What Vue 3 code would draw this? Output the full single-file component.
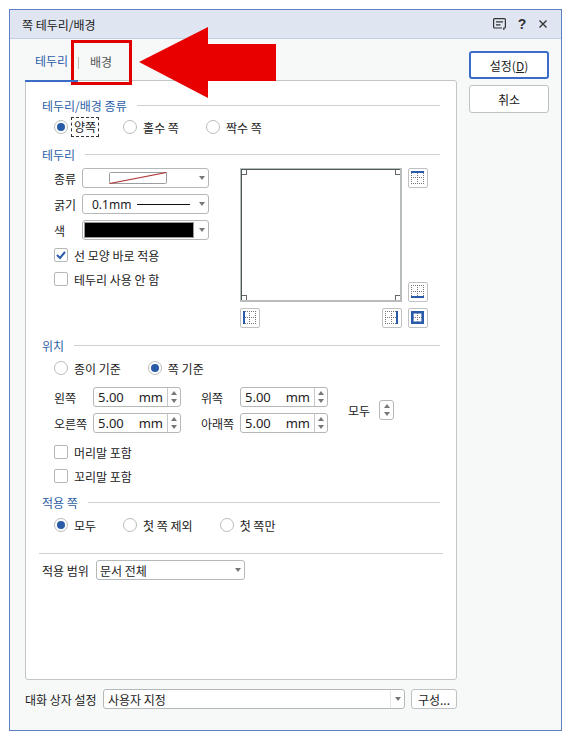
<script setup>
const sideRadios = [
  { label: '양쪽', on: true, focus: true },
  { label: '홀수 쪽' },
  { label: '짝수 쪽' }
]
const baseRadios = [{ label: '종이 기준' }, { label: '쪽 기준', on: true }]
const pageRadios = [{ label: '모두', on: true }, { label: '첫 쪽 제외' }, { label: '첫 쪽만' }]
const margins = [
  { label: '왼쪽', value: '5.00' },
  { label: '위쪽', value: '5.00' },
  { label: '오른쪽', value: '5.00' },
  { label: '아래쪽', value: '5.00' }
]
const edgeButtons = [
  { cls: 'pos-top', bar: 'M2 3h13', w: 2 },
  { cls: 'pos-bottom', bar: 'M2 14h13', w: 2 },
  { cls: 'pos-left', bar: 'M3 2v13', w: 2 },
  { cls: 'pos-right', bar: 'M14 2v13', w: 2 },
  { cls: 'pos-all', bar: 'M3.300 3.300h10.400v10.400H3.300z', w: 2.6 }
]
</script>

<template>
  <div class="page">
    <div class="win">
      <header class="title">
        <span>쪽 테두리/배경</span>
        <div class="title-icons">
          <svg width="13" height="14" viewBox="0 0 13 14" fill="none" stroke="#333" stroke-width="1.2">
            <path d="M9 11H1.600a1 1 0 0 1-1-1V2.600a1 1 0 0 1 1-1h9.800a1 1 0 0 1 1 1V10a1 1 0 0 1-1 1h-.6v2" />
            <path d="M3 4.800h7M3 7.800h4.500" />
          </svg>
          <span class="help">?</span>
          <svg width="10" height="10" viewBox="0 0 10 10" fill="none" stroke="#333" stroke-width="1.4">
            <path d="M1.500 1.500l7 7M8.500 1.500l-7 7" />
          </svg>
        </div>
      </header>

      <div class="body">
        <div class="main">
          <div class="left">
            <nav class="tabs">
              <div class="tab active">테두리</div>
              <div class="tab-sep"></div>
              <div class="tab">배경</div>
            </nav>

            <section class="panel">
              <div class="legend first"><span>테두리/배경 종류</span><i></i></div>
              <div class="radios">
                <label v-for="r in sideRadios" :key="r.label" class="radio">
                  <b class="dot" :class="{ on: r.on }"></b>
                  <span :class="{ focus: r.focus }">{{ r.label }}</span>
                </label>
              </div>

              <div class="legend after-radio"><span>테두리</span><i></i></div>
              <div class="border-block">
                <div class="controls">
                  <div class="field">
                    <span class="flabel">종류</span>
                    <div class="select fsel">
                      <svg class="line-none" width="58" height="12" viewBox="0 0 58 12" fill="none">
                        <rect x="0.500" y="0.500" width="57" height="11" rx="1" stroke="#9a9e9e" />
                        <path d="M0.500 11.500L57.500 0.500" stroke="#b03a3a" stroke-width="1.200" />
                      </svg>
                      <b class="caret"></b>
                    </div>
                  </div>
                  <div class="field">
                    <span class="flabel">굵기</span>
                    <div class="select fsel">
                      <span class="thick">0.1mm</span>
                      <i class="thick-line"></i>
                      <b class="caret"></b>
                    </div>
                  </div>
                  <div class="field">
                    <span class="flabel">색</span>
                    <div class="select fsel">
                      <div class="swatch"></div>
                      <b class="caret"></b>
                    </div>
                  </div>
                  <label class="check first-check">
                    <b class="box">
                      <svg width="12" height="12" viewBox="0 0 12 12" fill="none" stroke="#2a5ba8" stroke-width="2">
                        <path d="M2 6l3 3 5-6" />
                      </svg>
                    </b>
                    <span>선 모양 바로 적용</span>
                  </label>
                  <label class="check"><b class="box"></b><span>테두리 사용 안 함</span></label>
                </div>

                <div class="preview-grid">
                  <div class="preview">
                    <i class="crop tl"></i><i class="crop tr"></i><i class="crop bl"></i><i class="crop br"></i>
                  </div>
                  <button v-for="e in edgeButtons" :key="e.cls" class="edge" :class="e.cls">
                    <svg width="18" height="18" viewBox="0 0 18 18" fill="none">
                      <path d="M2 2.500h13M2 8.500h13M2 14.500h13M2.500 2v13M8.500 2v13M14.500 2v13" stroke="#777" stroke-width="1" stroke-dasharray="1 1" />
                      <path :d="e.bar" stroke="#2a5ba8" :stroke-width="e.w" />
                    </svg>
                  </button>
                </div>
              </div>

              <div class="legend after-block"><span>위치</span><i></i></div>
              <div class="radios near">
                <label v-for="r in baseRadios" :key="r.label" class="radio">
                  <b class="dot" :class="{ on: r.on }"></b>
                  <span>{{ r.label }}</span>
                </label>
              </div>

              <div class="spins">
                <template v-for="m in margins" :key="m.label">
                  <span class="spin-label">{{ m.label }}</span>
                  <div class="spin-input">
                    <span>{{ m.value }}</span>
                    <span>mm</span>
                    <div class="stepper"><b class="up"></b><b class="down"></b></div>
                  </div>
                </template>
                <span class="all-label">모두</span>
                <div class="all-spin"><b class="up"></b><b class="down"></b></div>
              </div>

              <label class="check header-check"><b class="box"></b><span>머리말 포함</span></label>
              <label class="check"><b class="box"></b><span>꼬리말 포함</span></label>

              <div class="legend after-check"><span>적용 쪽</span><i></i></div>
              <div class="radios near">
                <label v-for="r in pageRadios" :key="r.label" class="radio">
                  <b class="dot" :class="{ on: r.on }"></b>
                  <span>{{ r.label }}</span>
                </label>
              </div>

              <hr class="rule" />

              <div class="scope">
                <span class="scope-label">적용 범위</span>
                <div class="select scope-sel"><span>문서 전체</span><b class="caret"></b></div>
              </div>
            </section>
          </div>

          <aside class="side">
            <button class="btn primary">설정(<u>D</u>)</button>
            <button class="btn">취소</button>
          </aside>
        </div>

        <footer class="foot">
          <span class="foot-label">대화 상자 설정</span>
          <div class="select foot-sel"><span>사용자 지정</span><em></em><b class="caret"></b></div>
          <button class="btn compose">구성...</button>
        </footer>
      </div>

      <div class="mark-rect"></div>
      <svg class="mark-arrow" width="140" height="74" viewBox="0 0 140 74">
        <polygon points="0,35 69,0 69,17 137,17 137,54 69,54 69,71" fill="#e80000" />
      </svg>
    </div>
  </div>
</template>

<style scoped>
.page {
  width: 570px;
  height: 739px;
  box-sizing: border-box;
  padding: 9px 8px 0 9px;
  background: #fff;
  font-family: "Noto Sans CJK KR", "Noto Sans", sans-serif;
  font-size: 12px;
  color: #222;
  overflow: hidden;
}
.win {
  position: relative;
  height: 722px;
  box-sizing: border-box;
  border: 1px solid #5b80c4;
  display: flex;
  flex-direction: column;
  background: #f7f9f9;
}
.title {
  height: 28px;
  flex: none;
  border-bottom: 1px solid #c3d0e4;
  background: #dfe5f1;
  display: flex;
  align-items: center;
  justify-content: space-between;
  padding: 0 13px 0 12px;
}
.title-icons {
  display: flex;
  align-items: center;
  gap: 11px;
}
.help {
  width: 10px;
  text-align: center;
  font-family: "Liberation Sans", sans-serif;
  font-weight: 700;
  font-size: 14px;
  color: #333;
}
.body {
  flex: 1;
  display: flex;
  flex-direction: column;
  padding-left: 15px;
}
.main {
  display: flex;
  gap: 12px;
}
.left {
  width: 432px;
}
.tabs {
  height: 41px;
  display: flex;
  align-items: center;
  padding-top: 5px;
  box-sizing: border-box;
  position: relative;
  z-index: 1;
}
.tab {
  color: #555;
  line-height: 18px;
}
.tab.active {
  color: #2d5fa8;
  width: 53px;
  box-sizing: border-box;
  padding-left: 10px;
  height: 38px;
  line-height: 33px;
  border-bottom: 2px solid #3a6cc8;
  margin-bottom: -3px;
  margin-top: -2px;
}
.tab-sep {
  width: 1px;
  height: 12px;
  background: #bbb;
  margin-right: 11px;
  position: relative;
  top: 1px;
}
.panel {
  height: 600px;
  box-sizing: border-box;
  border: 1px solid #c2c6c6;
  border-radius: 3px;
  background: #fff;
  padding: 12px 16px 0 16px;
}
.legend {
  height: 24px;
  display: flex;
  align-items: center;
  gap: 10px;
  color: #2d5fa8;
}
.legend i {
  flex: 1;
  height: 1px;
  background: #cfd1d1;
}
.after-radio,
.after-block {
  margin-top: 5px;
}
.after-check {
  margin-top: 4px;
}
.radios {
  height: 20px;
  display: flex;
  align-items: center;
  gap: 27px;
  margin-left: 12px;
}
.radios.near {
  margin-top: 1px;
}
.radio {
  display: flex;
  align-items: center;
  gap: 6px;
}
.dot {
  width: 14px;
  height: 14px;
  box-sizing: border-box;
  border: 1px solid #b9bcbc;
  border-radius: 50%;
  background: #fff;
  display: flex;
  align-items: center;
  justify-content: center;
}
.dot.on::after {
  content: "";
  width: 8px;
  height: 8px;
  border-radius: 50%;
  background: #2a5ba8;
}
.focus {
  outline: 1px dashed #333;
  outline-offset: 2px;
  line-height: 14px;
}
.border-block {
  display: flex;
  margin: 2px 0 0 12px;
}
.controls {
  width: 186px;
  display: flex;
  flex-direction: column;
}
.field {
  height: 20px;
  display: flex;
  align-items: center;
  margin-bottom: 6px;
}
.flabel {
  width: 28px;
}
.select {
  position: relative;
  height: 20px;
  box-sizing: border-box;
  border: 1px solid #b4b8b8;
  border-radius: 3px;
  background: #fff;
  display: flex;
  align-items: center;
}
.fsel {
  width: 127px;
}
.caret {
  position: absolute;
  right: 3px;
  top: 7px;
  width: 0;
  height: 0;
  border-left: 3px solid transparent;
  border-right: 3px solid transparent;
  border-top: 4px solid #777;
}
.line-none {
  margin-left: 26px;
}
.thick {
  margin-left: 9px;
  font-family: "Noto Sans", sans-serif;
}
.thick-line {
  width: 53px;
  height: 1px;
  background: #111;
  margin-left: 6px;
}
.swatch {
  width: 110px;
  height: 16px;
  margin-left: 1px;
  box-sizing: border-box;
  background: #000;
  border: 1px solid #999;
}
.check {
  height: 20px;
  display: flex;
  align-items: center;
  gap: 6px;
}
.check + .check {
  margin-top: 4px;
}
.first-check {
  margin-top: -1px;
}
.box {
  width: 14px;
  height: 14px;
  box-sizing: border-box;
  border: 1px solid #b4b8b8;
  border-radius: 2px;
  background: #fff;
  display: flex;
  align-items: center;
  justify-content: center;
}
.preview-grid {
  display: grid;
  grid-template-columns: 20px 122px 20px 6px 20px;
  grid-template-rows: 20px 94px 20px 6px 20px;
}
.preview {
  grid-column: 1 / 4;
  grid-row: 1 / 4;
  position: relative;
  box-sizing: border-box;
  background: #fff;
  border: 1px solid #b8bcbc;
  border-right-width: 2px;
  border-bottom-width: 2px;
  box-shadow: inset 1px 1px 0 #4a5a58;
}
.crop {
  position: absolute;
  width: 4px;
  height: 4px;
  border: 0 solid #666;
}
.tl { left: 1px; top: 1px; border-width: 0 1px 1px 0; }
.tr { right: 0; top: 1px; border-width: 0 0 1px 1px; }
.bl { left: 1px; bottom: 0; border-width: 1px 1px 0 0; }
.br { right: 0; bottom: 0; border-width: 1px 0 0 1px; }
.edge {
  width: 20px;
  height: 20px;
  padding: 0;
  box-sizing: border-box;
  border: 1px solid #bfc2c2;
  border-radius: 2px;
  background: #fff;
  display: flex;
  align-items: center;
  justify-content: center;
}
.pos-top { grid-column: 5; grid-row: 1; }
.pos-bottom { grid-column: 5; grid-row: 3; }
.pos-left { grid-column: 1; grid-row: 5; }
.pos-right { grid-column: 3; grid-row: 5; }
.pos-all { grid-column: 5; grid-row: 5; }
.spins {
  display: grid;
  grid-template-columns: 39px 88px 20px 39px 88px 20px 31px 15px;
  grid-template-rows: 20px 20px;
  row-gap: 6px;
  margin: 9px 0 0 12px;
  align-items: center;
}
.spin-input {
  position: relative;
  height: 20px;
  box-sizing: border-box;
  border: 1px solid #b4b8b8;
  border-radius: 3px;
  background: #fff;
  display: flex;
  align-items: center;
  justify-content: space-between;
  padding: 0 17px 0 4px;
  font-family: "Noto Sans", sans-serif;
  font-size: 13px;
}
.spin-label:nth-child(1),
.spin-label:nth-child(5) {
  grid-column: 1;
}
.spin-input:nth-child(2),
.spin-input:nth-child(6) {
  grid-column: 2;
}
.spin-label:nth-child(3),
.spin-label:nth-child(7) {
  grid-column: 4;
}
.spin-input:nth-child(4),
.spin-input:nth-child(8) {
  grid-column: 5;
}
.spin-label:nth-child(-n+4),
.spin-input:nth-child(-n+4) {
  grid-row: 1;
}
.spin-label:nth-child(n+5),
.spin-input:nth-child(n+5) {
  grid-row: 2;
}
.stepper {
  position: absolute;
  right: 0;
  top: 0;
  bottom: 0;
  width: 12px;
  border-left: 1px solid #c4c8c8;
  display: flex;
  flex-direction: column;
  align-items: center;
  justify-content: center;
  gap: 4px;
}
.up,
.down {
  width: 0;
  height: 0;
  border-left: 3px solid transparent;
  border-right: 3px solid transparent;
}
.up { border-bottom: 4px solid #777; }
.down { border-top: 4px solid #777; }
.all-label {
  grid-column: 7;
  grid-row: 1 / 3;
}
.all-spin {
  grid-column: 8;
  grid-row: 1 / 3;
  height: 20px;
  box-sizing: border-box;
  border: 1px solid #b4b8b8;
  border-radius: 3px;
  background: #fff;
  display: flex;
  flex-direction: column;
  align-items: center;
  justify-content: center;
  gap: 4px;
}
.panel > .check {
  margin-left: 12px;
}
.header-check {
  margin-top: 9px;
}
.rule {
  border: 0;
  height: 1px;
  background: #cfd1d1;
  margin: 18px -3px 0;
}
.scope {
  display: flex;
  align-items: center;
  margin-top: 6px;
}
.scope-label {
  width: 54px;
}
.scope-sel {
  width: 149px;
  padding-left: 3px;
}
.side {
  display: flex;
  flex-direction: column;
  gap: 6px;
  padding-top: 12px;
}
.btn {
  font: inherit;
  color: #222;
  width: 80px;
  height: 28px;
  padding: 0;
  box-sizing: border-box;
  border: 1px solid #bfc2c2;
  border-radius: 3px;
  background: #fff;
}
.btn.primary {
  border: 2px solid #3a6cc8;
}
.foot {
  display: flex;
  align-items: center;
  margin-top: 9px;
  width: 432px;
}
.foot-label {
  width: 78px;
}
.foot-sel {
  width: 302px;
  padding-left: 4px;
}
.foot-sel em {
  position: absolute;
  right: 13px;
  top: 0;
  bottom: 0;
  width: 1px;
  background: #e6e8e8;
}
.btn.compose {
  width: 46px;
  height: 20px;
  margin-left: 6px;
}
.mark-rect {
  position: absolute;
  left: 61px;
  top: 30px;
  width: 61px;
  height: 45px;
  box-sizing: border-box;
  border: 3px solid #e00000;
}
.mark-arrow {
  position: absolute;
  left: 129px;
  top: 17px;
}
</style>

<style>
html, body {
  margin: 0;
  background: #fff;
}
</style>
